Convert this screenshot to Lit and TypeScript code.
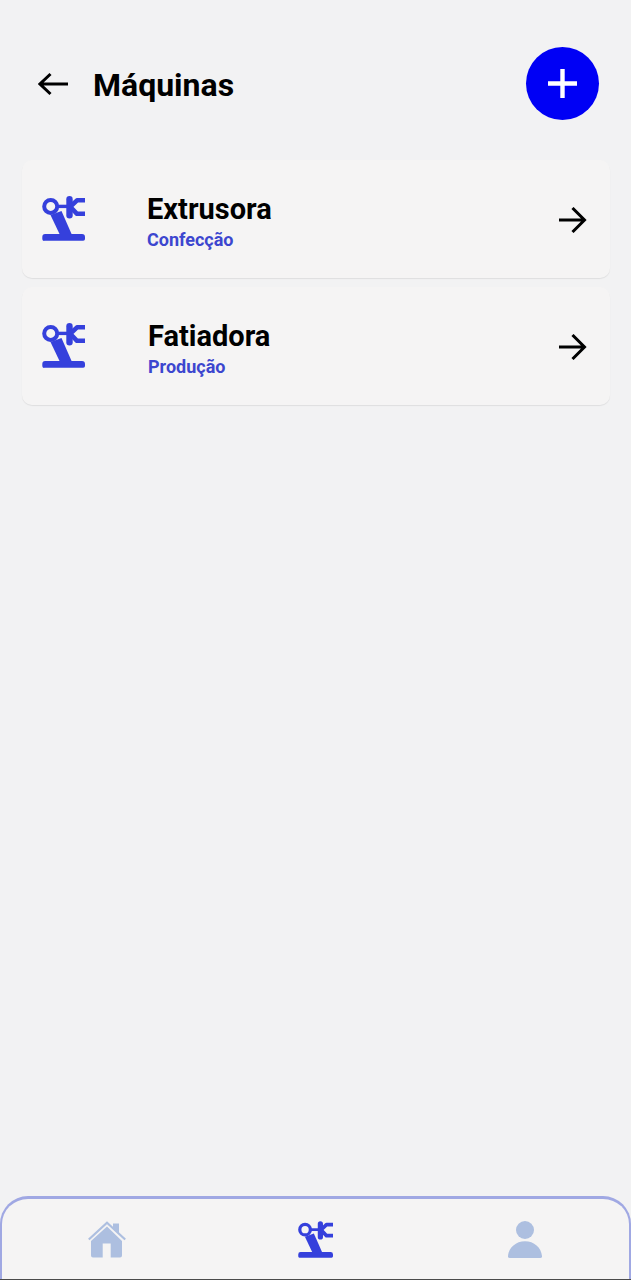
import { LitElement, html, css } from "lit";
import { customElement } from "lit/decorators.js";

const robot = (cls: string) => html`<svg class=${cls} viewBox="0 0 43 45" aria-hidden="true">
  <g fill="none" stroke="currentColor" stroke-linejoin="round">
    <circle cx="8.7" cy="10.4" r="6.5" stroke-width="4"/>
    <path d="M14 10.4H26" stroke-width="3.4"/>
    <path d="M27.500 3.200V19.300" stroke-width="6.400" stroke-linecap="round"/>
    <path d="M28.500 10.500L35 4.300H43M28.500 11L35 17.800H43" stroke-width="4.600"/>
  </g>
  <path fill="currentColor" d="M8.500 19L18 39H30L19.500 15z"/>
  <path fill="currentColor" d="M3.500 38H40a3 3 0 0 1 3 3V43a1.800 1.800 0 0 1-1.800 1.800H2.500A1.800 1.800 0 0 1 .3 43v-2a3 3 0 0 1 3.200-3z"/>
</svg>`;

const arrowRight = html`<svg class="go" viewBox="0 0 28 26" aria-hidden="true"><path d="M0 13H25.500M13.500 1L25.500 13L13.500 25" fill="none" stroke="#000" stroke-width="3"/></svg>`;

@customElement("app-root")
export class AppRoot extends LitElement {
  static styles = css`
    :host {
      display: flex;
      flex-direction: column;
      min-height: 1280px;
      background: #f2f2f3;
      font-family: Roboto, "Liberation Sans", sans-serif;
      color: #000;
    }
    .head {
      display: flex;
      align-items: center;
      padding: 47px 32px 0 38px;
      height: 73px;
    }
    .back { width: 30px; height: 24px; margin-right: 25px; flex: none; }
    h1 { margin: 2px 0 0; flex: 1; font-size: 32px; line-height: 36px; font-weight: 700; }
    .add {
      width: 73px; height: 73px; border-radius: 50%; background: #0000f5;
      display: flex; align-items: center; justify-content: center; flex: none;
    }
    .add svg { width: 29px; height: 29px; }
    .list {
      display: flex; flex-direction: column; gap: 9px;
      margin: 40px 21px 0 22px;
    }
    .card {
      height: 118px; box-sizing: border-box;
      background: #f5f4f4; border-radius: 10px;
      box-shadow: 0 1px 1px rgba(0,0,0,.08);
      display: flex; align-items: center;
      padding: 0 23px 0 20px;
    }
    .ic { width: 43px; height: 45px; color: #3540dc; flex: none; margin-top: -1px; }
    .text { flex: 1; margin-left: 62px; margin-top: 5px; }
    .card.second .text { margin-left: 63px; }
    .name { font-size: 29px; line-height: 32px; font-weight: 700; }
    .sub { font-size: 18px; line-height: 20px; font-weight: 700; color: #3c46cf; margin-top: 5px; }
    .go { width: 28px; height: 26px; flex: none; margin-top: 1px; }
    .nav {
      margin-top: auto; height: 84px; box-sizing: border-box;
      background: #f5f4f4;
      border: 2px solid #a0a8e3; border-top-width: 3px; border-bottom: 0;
      border-radius: 28px 28px 0 0;
      display: grid; grid-template-columns: 1fr 1fr 1fr; align-items: center;
      justify-items: center;
      position: relative;
    }
    .nav::after {
      content: ""; position: absolute; left: -2px; right: -2px; bottom: 0; height: 1.5px; background: #4a4a4a;
    }
    .nav svg { display: block; }
    .home { width: 38px; height: 37px; }
    .mid { width: 35px; height: 37px; color: #3540dc; }
    .user { width: 34px; height: 37px; }
  `;

  render() {
    return html`
      <div class="head">
        <svg class="back" viewBox="0 0 30 24" aria-hidden="true"><path d="M30 12H2M12.500 2L2 12L12.500 22" fill="none" stroke="#000" stroke-width="3"/></svg>
        <h1>Máquinas</h1>
        <div class="add"><svg viewBox="0 0 29 29" aria-hidden="true"><path d="M14.500 0V29M0 14.500H29" stroke="#fff" stroke-width="4.400"/></svg></div>
      </div>
      <div class="list">
        <div class="card">
          ${robot("ic")}
          <div class="text"><div class="name">Extrusora</div><div class="sub">Confecção</div></div>
          ${arrowRight}
        </div>
        <div class="card second">
          ${robot("ic")}
          <div class="text"><div class="name">Fatiadora</div><div class="sub">Produção</div></div>
          ${arrowRight}
        </div>
      </div>
      <div class="nav">
        <svg class="home" viewBox="0 0 38 37" aria-hidden="true">
          <path fill="#adbfe0" d="M19 5.500L3 20V34.500a2 2 0 0 0 2 2H14.700V22.600H22.700V36.500H32a2 2 0 0 0 2-2V20z"/>
          <path fill="none" stroke="#adbfe0" stroke-width="2.200" d="M.8 18.500L19 1.800L37.200 18.500"/>
          <path fill="#adbfe0" d="M25 2.600H31V13L25 7.500z"/>
        </svg>
        ${robot("mid")}
        <svg class="user" viewBox="0 0 34 37" aria-hidden="true">
          <circle cx="17" cy="9" r="9" fill="#adbfe0"/>
          <path fill="#adbfe0" d="M1.800 37A1.800 1.800 0 0 1 0 35C.8 26.500 8 20.300 17 20.300S33.200 26.500 34 35A1.800 1.800 0 0 1 32.200 37z"/>
        </svg>
      </div>
    `;
  }
}
